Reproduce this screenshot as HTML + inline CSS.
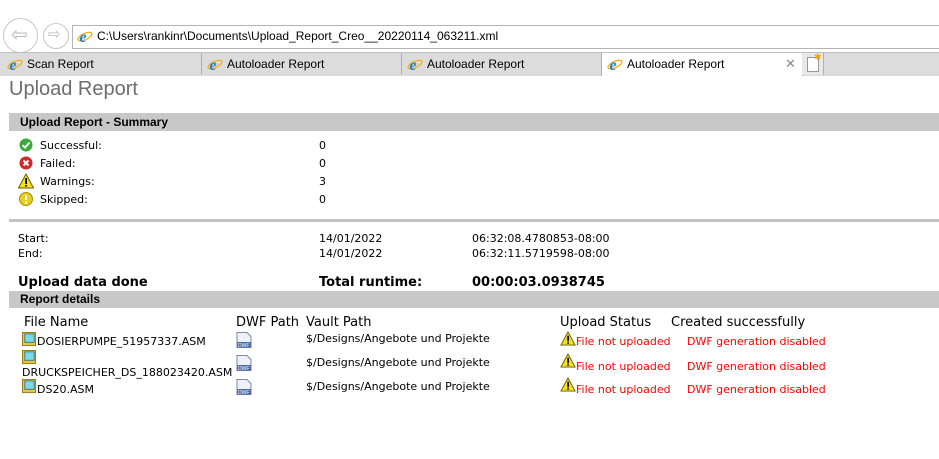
<!DOCTYPE html>
<html><head><meta charset="utf-8"><style>
body{margin:0;width:939px;height:459px;background:#fff;position:relative;overflow:hidden;font-family:"DejaVu Sans","Liberation Sans",sans-serif;font-size:11px;color:#000}
.a{position:absolute;white-space:nowrap;line-height:13px}
.ui{font-family:"Liberation Sans",sans-serif;font-size:12px}
.bar{position:absolute;left:9px;right:0;background:#c8c8c8}
.b{font-weight:bold}
.red{color:#f00}
.ie{position:absolute;width:16px;height:16px}
</style></head><body>
<svg width="0" height="0" style="position:absolute"><defs>
<symbol id="ie" viewBox="0 0 16 16"><ellipse cx="8" cy="8.5" rx="7.5" ry="3" fill="none" stroke="#f2b01e" stroke-width="1.4" transform="rotate(-25 8 8.5)"/><text x="2.5" y="14" font-family="Liberation Serif,serif" font-size="16" font-style="italic" fill="#1e7fd6" font-weight="bold">e</text></symbol>
<symbol id="warn" viewBox="0 0 16 16"><path d="M8 1 L15.5 15 H0.5Z" fill="#f5e11a" stroke="#6a5a00" stroke-width="1"/><rect x="7.2" y="5" width="1.8" height="6" fill="#000"/><rect x="7.2" y="12" width="1.8" height="1.6" fill="#000"/></symbol>
<symbol id="asm" viewBox="0 0 16 16"><rect x="0.5" y="0.5" width="14" height="14" fill="#e8c83a" stroke="#9a7a10"/><rect x="3" y="2" width="10" height="9" fill="#7fd8e8" stroke="#2a7a9a"/></symbol>
<symbol id="dwf" viewBox="0 0 16 16"><path d="M1 0.5H11L15 4.5V15.5H1Z" fill="#eef2f8" stroke="#7a8aa8"/><rect x="1" y="10" width="14" height="5.5" fill="#4a6aa8"/><text x="2" y="15" font-size="5" fill="#fff" font-family="Liberation Sans">DWF</text></symbol>
</defs></svg>

<div style="position:absolute;left:3px;top:18px;width:33px;height:33px;border:1px solid #c8c8c8;border-radius:50%"></div>
<div class="a" style="left:11px;top:24px;font-size:20px;color:#bbb;line-height:20px">⇦</div>
<div style="position:absolute;left:43px;top:23px;width:24px;height:24px;border:1px solid #c8c8c8;border-radius:50%"></div>
<div class="a" style="left:48px;top:27px;font-size:15px;color:#bbb;line-height:15px">⇨</div>
<div style="position:absolute;left:72px;top:25px;right:0;height:22px;border:1px solid #b4b4b4;border-right:none"></div>
<svg class="ie" style="left:77px;top:28px"><use href="#ie"/></svg>
<div class="a ui" style="left:97px;top:30px">C:\Users\rankinr\Documents\Upload_Report_Creo__20220114_063211.xml</div>

<div style="position:absolute;left:0;top:52px;width:939px;height:23px;background:#dcdcdc;border-top:1px solid #c0c0c0"></div>
<div style="position:absolute;left:201px;top:53px;width:1px;height:22px;background:#b0b0b0"></div>
<div style="position:absolute;left:401px;top:53px;width:1px;height:22px;background:#b0b0b0"></div>
<div style="position:absolute;left:601px;top:52px;width:200px;height:23px;background:#fff;border-left:1px solid #b0b0b0;border-right:1px solid #b0b0b0;border-top:1px solid #c0c0c0"></div>
<div style="position:absolute;left:802px;top:53px;width:21px;height:22px;background:#e8e8e8;border-right:1px solid #b0b0b0"></div>
<div style="position:absolute;left:807px;top:57px;width:10px;height:13px;border:1px solid #999;background:#fff"></div>
<div class="a" style="left:814px;top:52px;color:#f0a000;font-size:9px">✱</div>
<svg class="ie" style="left:7px;top:56px"><use href="#ie"/></svg>
<div class="a ui" style="left:27px;top:58px">Scan Report</div>
<svg class="ie" style="left:207px;top:56px"><use href="#ie"/></svg>
<div class="a ui" style="left:227px;top:58px">Autoloader Report</div>
<svg class="ie" style="left:407px;top:56px"><use href="#ie"/></svg>
<div class="a ui" style="left:427px;top:58px">Autoloader Report</div>
<svg class="ie" style="left:607px;top:56px"><use href="#ie"/></svg>
<div class="a ui" style="left:627px;top:58px">Autoloader Report</div>
<div class="a ui" style="left:785px;top:57px;color:#888;font-size:13px">✕</div>

<div class="a" style="left:9px;top:78px;font-family:'Liberation Sans',sans-serif;font-size:20px;color:#6d6d6d;line-height:22px">Upload Report</div>

<div class="bar" style="top:113px;height:18px"></div>
<div class="a b" style="left:20px;top:116px;font-family:'Liberation Sans',sans-serif;font-size:12px">Upload Report - Summary</div>

<svg style="position:absolute;left:19px;top:138px" width="14" height="14"><circle cx="7" cy="7" r="6.5" fill="#3aa83a"/><path d="M3.5 7.2L6 9.6L10.5 4.5" stroke="#fff" stroke-width="2" fill="none"/></svg>
<svg style="position:absolute;left:19px;top:156px" width="14" height="14"><circle cx="7" cy="7" r="6.5" fill="#d42828"/><path d="M4.5 4.5L9.5 9.5M9.5 4.5L4.5 9.5" stroke="#fff" stroke-width="2"/></svg>
<svg style="position:absolute;left:18px;top:173px" width="16" height="16"><use href="#warn"/></svg>
<svg style="position:absolute;left:19px;top:192px" width="14" height="14"><circle cx="7" cy="7" r="6.5" fill="#e8d020" stroke="#a89000"/><rect x="6" y="3" width="2" height="5" fill="#fff"/><rect x="6" y="9.5" width="2" height="2" fill="#fff"/></svg>
<div class="a" style="left:40px;top:139px">Successful:</div><div class="a" style="left:319px;top:139px">0</div>
<div class="a" style="left:40px;top:157px">Failed:</div><div class="a" style="left:319px;top:157px">0</div>
<div class="a" style="left:40px;top:175px">Warnings:</div><div class="a" style="left:319px;top:175px">3</div>
<div class="a" style="left:40px;top:193px">Skipped:</div><div class="a" style="left:319px;top:193px">0</div>

<div style="position:absolute;left:9px;right:0;top:219px;height:3px;background:#c4c4c4"></div>

<div class="a" style="left:18px;top:232px">Start:</div><div class="a" style="left:319px;top:232px">14/01/2022</div><div class="a" style="left:472px;top:232px">06:32:08.4780853-08:00</div>
<div class="a" style="left:18px;top:247px">End:</div><div class="a" style="left:319px;top:247px">14/01/2022</div><div class="a" style="left:472px;top:247px">06:32:11.5719598-08:00</div>

<div class="a b" style="left:18px;top:275px;font-size:13px;line-height:15px">Upload data done</div>
<div class="a b" style="left:319px;top:275px;font-size:13px;line-height:15px">Total runtime:</div>
<div class="a b" style="left:472px;top:275px;font-size:13px;line-height:15px">00:00:03.0938745</div>

<div class="bar" style="top:291px;height:17px"></div>
<div class="a b" style="left:20px;top:293px;font-family:'Liberation Sans',sans-serif;font-size:12px">Report details</div>

<div class="a" style="left:24px;top:315px;font-size:13px;line-height:15px">File Name</div>
<div class="a" style="left:236px;top:315px;font-size:13px;line-height:15px">DWF Path</div>
<div class="a" style="left:306px;top:315px;font-size:13px;line-height:15px">Vault Path</div>
<div class="a" style="left:560px;top:315px;font-size:13px;line-height:15px">Upload Status</div>
<div class="a" style="left:671px;top:315px;font-size:13px;line-height:15px">Created successfully</div>

<svg style="position:absolute;left:22px;top:332px" width="15" height="15"><use href="#asm"/></svg>
<div class="a" style="left:37px;top:335px">DOSIERPUMPE_51957337.ASM</div>
<svg style="position:absolute;left:236px;top:332px" width="16" height="16"><use href="#dwf"/></svg>
<div class="a" style="left:306px;top:332px">$/Designs/Angebote und Projekte</div>
<svg style="position:absolute;left:560px;top:331px" width="16" height="15"><use href="#warn"/></svg>
<div class="a red" style="left:576px;top:335px">File not uploaded</div>
<div class="a red" style="left:687px;top:335px">DWF generation disabled</div>

<svg style="position:absolute;left:22px;top:350px" width="15" height="15"><use href="#asm"/></svg>
<div class="a" style="left:22px;top:366px">DRUCKSPEICHER_DS_188023420.ASM</div>
<svg style="position:absolute;left:236px;top:355px" width="16" height="16"><use href="#dwf"/></svg>
<div class="a" style="left:306px;top:356px">$/Designs/Angebote und Projekte</div>
<svg style="position:absolute;left:560px;top:353px" width="16" height="15"><use href="#warn"/></svg>
<div class="a red" style="left:576px;top:360px">File not uploaded</div>
<div class="a red" style="left:687px;top:360px">DWF generation disabled</div>

<svg style="position:absolute;left:22px;top:379px" width="15" height="15"><use href="#asm"/></svg>
<div class="a" style="left:37px;top:383px">DS20.ASM</div>
<svg style="position:absolute;left:236px;top:379px" width="16" height="16"><use href="#dwf"/></svg>
<div class="a" style="left:306px;top:380px">$/Designs/Angebote und Projekte</div>
<svg style="position:absolute;left:560px;top:377px" width="16" height="15"><use href="#warn"/></svg>
<div class="a red" style="left:576px;top:383px">File not uploaded</div>
<div class="a red" style="left:687px;top:383px">DWF generation disabled</div>
</body></html>
